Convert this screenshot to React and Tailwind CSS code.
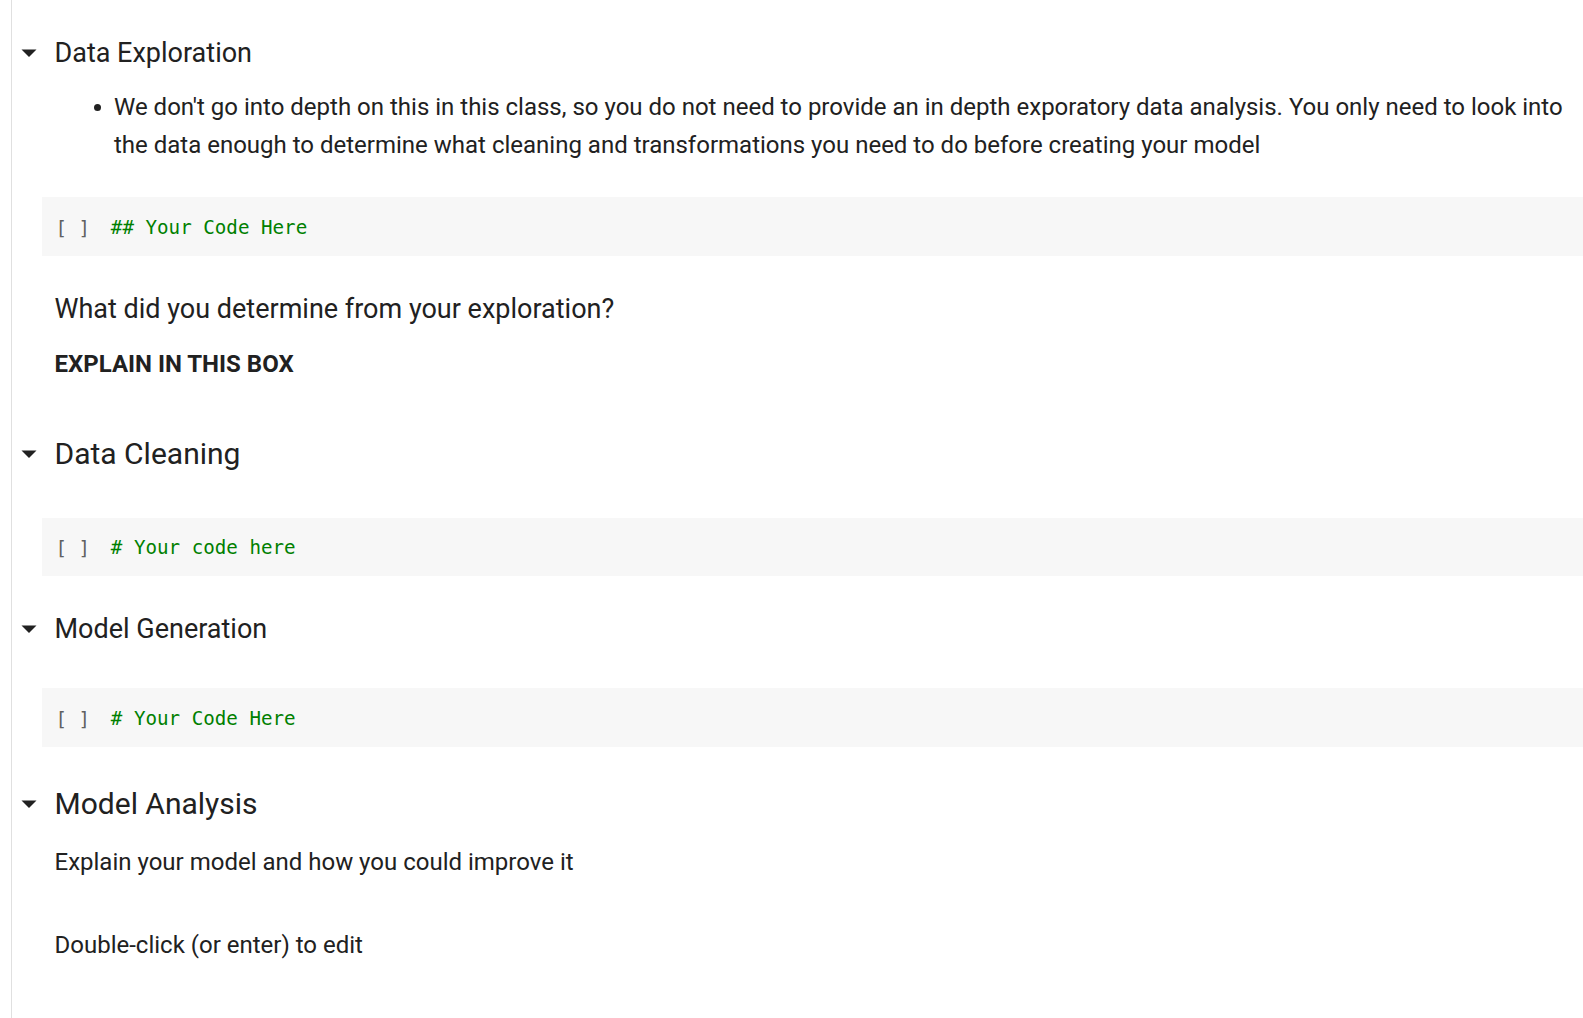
import React from "react";

const Tri = () => (
  <div className="w-[42.5px] shrink-0 flex items-center">
    <svg width="16" height="8" viewBox="0 0 16 8" className="ml-[8.5px]">
      <path d="M0.5 0.5 L15.5 0.5 L8 8 Z" fill="#212121" />
    </svg>
  </div>
);

const Heading = ({ children, size }) => (
  <div className={`flex items-center ${size}`}>
    <Tri />
    <div className="text-[#212121]">{children}</div>
  </div>
);

const mono = { fontFamily: '"DejaVu Sans Mono", "Liberation Mono", monospace' };

const Code = ({ children, className }) => (
  <div className={`ml-[29.5px] h-[58.5px] bg-[#f7f7f7] flex items-center pl-[14px] pt-[3px] ${className}`}>
    <span className="text-[#616161] text-[19px]" style={mono}>[ ]</span>
    <span className="ml-[21px] text-[#008000] text-[19.2px]" style={mono}>{children}</span>
  </div>
);

export default function App() {
  return (
    <div className="w-[1583px] h-[1018px] overflow-hidden bg-white pl-[11px]" style={{ fontFamily: 'Roboto, "Noto Sans", sans-serif' }}>
      <div className="h-full border-l border-[#e0e0e0] flex flex-col">
        <div className="h-[32.5px]" />
        <Heading size="text-[27px] leading-[40px]">Data Exploration</Heading>
        <div className="mt-[15px] flex pl-[42.5px] text-[24px] leading-[38.4px] text-[#212121] pr-[14px]">
          <div className="w-[59.5px] shrink-0 flex justify-end pr-[13px] pt-[16px]">
            <div className="w-[7px] h-[7px] rounded-full bg-[#212121]" />
          </div>
          <div>
            We don't go into depth on this in this class, so you do not need to provide an in depth exporatory data analysis. You only need to look into the data enough to determine what cleaning and transformations you need to do before creating your model
          </div>
        </div>
        <Code className="mt-[33px]">## Your Code Here</Code>
        <div className="mt-[33px] pl-[42.5px] text-[27px] leading-[40px] text-[#212121]">What did you determine from your exploration?</div>
        <div className="mt-[17px] pl-[42.5px] text-[24px] leading-[36px] font-bold text-[#212121]">EXPLAIN IN THIS BOX</div>
        <div className="mt-[50.5px]">
          <Heading size="text-[30px] leading-[44px]">Data Cleaning</Heading>
        </div>
        <Code className="mt-[41.5px]"># Your code here</Code>
        <div className="mt-[32.5px]">
          <Heading size="text-[27px] leading-[40px]">Model Generation</Heading>
        </div>
        <Code className="mt-[39.5px]"># Your Code Here</Code>
        <div className="mt-[35.6px]">
          <Heading size="text-[30px] leading-[44px]">Model Analysis</Heading>
        </div>
        <div className="mt-[18px] pl-[42.5px] text-[24px] leading-[36px] text-[#212121]">Explain your model and how you could improve it</div>
        <div className="mt-[47px] pl-[42.5px] text-[24px] leading-[36px] text-[#212121]">Double-click (or enter) to edit</div>
      </div>
    </div>
  );
}
